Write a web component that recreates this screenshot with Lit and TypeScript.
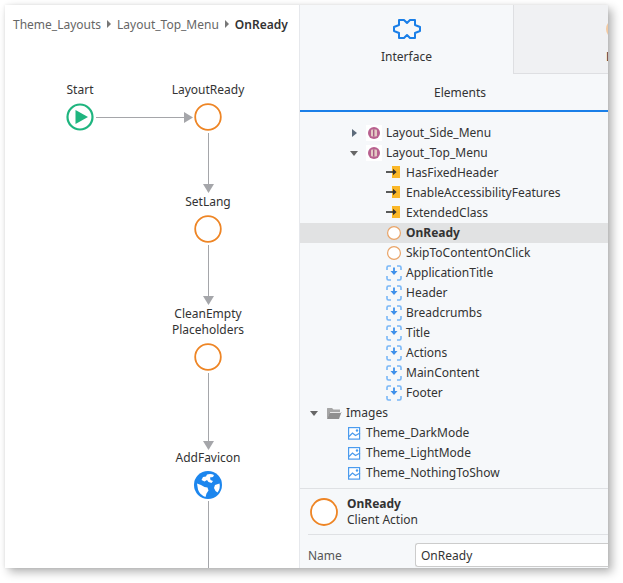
import { LitElement, html, css, svg } from "lit";
import { customElement } from "lit/decorators.js";

type Kind = "layout" | "input" | "action" | "slot" | "folder" | "image";
interface Row {
  label: string;
  kind: Kind;
  level: string;
  arrow?: "right" | "down";
  selected?: boolean;
}

const rows: Row[] = [
  { label: "Layout_Side_Menu", kind: "layout", level: "l2", arrow: "right" },
  { label: "Layout_Top_Menu", kind: "layout", level: "l2", arrow: "down" },
  { label: "HasFixedHeader", kind: "input", level: "l3" },
  { label: "EnableAccessibilityFeatures", kind: "input", level: "l3" },
  { label: "ExtendedClass", kind: "input", level: "l3" },
  { label: "OnReady", kind: "action", level: "l3", selected: true },
  { label: "SkipToContentOnClick", kind: "action", level: "l3" },
  { label: "ApplicationTitle", kind: "slot", level: "l3" },
  { label: "Header", kind: "slot", level: "l3" },
  { label: "Breadcrumbs", kind: "slot", level: "l3" },
  { label: "Title", kind: "slot", level: "l3" },
  { label: "Actions", kind: "slot", level: "l3" },
  { label: "MainContent", kind: "slot", level: "l3" },
  { label: "Footer", kind: "slot", level: "l3" },
  { label: "Images", kind: "folder", level: "l1", arrow: "down" },
  { label: "Theme_DarkMode", kind: "image", level: "limg" },
  { label: "Theme_LightMode", kind: "image", level: "limg" },
  { label: "Theme_NothingToShow", kind: "image", level: "limg" },
];

interface Node {
  x: number;
  y: number;
  lines: string[];
  kind: "start" | "action" | "globe";
}

/* canvas coordinates: node centre */
const nodes: Node[] = [
  { x: 75, y: 112, lines: ["Start"], kind: "start" },
  { x: 203, y: 112, lines: ["LayoutReady"], kind: "action" },
  { x: 203, y: 224, lines: ["SetLang"], kind: "action" },
  { x: 203, y: 352, lines: ["CleanEmpty", "Placeholders"], kind: "action" },
  { x: 203, y: 480, lines: ["AddFavicon"], kind: "globe" },
];

const treeIcon = (k: Kind) => {
  switch (k) {
    case "layout":
      return html`<svg class="ic lay" viewBox="0 0 16 16">
        <rect width="16" height="16" fill="#fff" />
        <circle cx="8" cy="8" r="6" fill="#b8608f" />
        <rect x="5" y="4.5" width="6" height="7" rx="1" fill="#e4c9c4" />
        <rect x="7" y="4.5" width="1.4" height="7" fill="#a85a86" />
      </svg>`;
    case "input":
      return html`<svg class="ic" viewBox="0 0 16 16">
        <rect x="6" y="1" width="8" height="12" fill="#fbb829" />
        <path d="M0 7h9" stroke="#333" stroke-width="1.6" fill="none" />
        <path d="M7 3.8 10.6 7 7 10.2z" fill="#333" />
      </svg>`;
    case "action":
      return html`<svg class="ic" viewBox="0 0 16 16">
        <circle cx="8" cy="8" r="6.4" fill="#fff" stroke="#e9a468" stroke-width="1.2" />
      </svg>`;
    case "slot":
      return html`<svg class="ic" viewBox="0 0 16 16">
        <path
          d="M1 5V2.500Q1 1 2.500 1H5M11 1h2.500Q15 1 15 2.500V5M15 11v2.500Q15 15 13.500 15H11M5 15H2.500Q1 15 1 13.500V11"
          fill="none"
          stroke="#79b7f7"
          stroke-width="1.600"
        />
        <path d="M8 2.500V7" stroke="#3f90ea" stroke-width="1.800" fill="none" />
        <path d="M4.500 6h7L8 10z" fill="#3f90ea" />
      </svg>`;
    case "folder":
      return html`<svg class="ic" viewBox="0 0 16 16">
        <path d="M1 14V3.500Q1 3 1.500 3H6l1.500 1.500H14V7H4.500z" fill="#a6a6a6" />
        <path d="M1 14 4 7h11.500L13 14z" fill="#8f8f8f" />
        <path d="M4 7.500h11" stroke="#e8e8e8" stroke-width="1" />
      </svg>`;
    case "image":
      return html`<svg class="ic" viewBox="0 0 16 16">
        <rect x="2.600" y="2.600" width="11" height="11.500" fill="#fff" stroke="#4a9bee" stroke-width="1.200" />
        <path d="M3 11.500 6.500 8l3 2.500L14 8" fill="none" stroke="#4a9bee" stroke-width="1.200" />
        <circle cx="11" cy="5.500" r="1.200" fill="#4a9bee" />
      </svg>`;
  }
};

const nodeIcon = (k: Node["kind"]) => {
  if (k === "start")
    return svg`<circle cx="14" cy="14" r="12.500" fill="#fff" stroke="#1fb57f" stroke-width="2.200" />
      <path d="M9.500 7 22 14 9.500 21z" fill="#1fb57f" />`;
  if (k === "action")
    return svg`<circle cx="14" cy="14" r="12.800" fill="#fff" stroke="#ee8525" stroke-width="1.800" />`;
  return svg`<circle cx="14" cy="14" r="14" fill="#1c86ee" />
    <path d="M13 3.500c2-.8 5-.8 7 .5l-1 2-3 .5.500 2.500 2.500 1-1.500 2-3-1-1.500-2-2.500 1.500-3-1.500L9 6l3-.5z" fill="#fff" />
    <path d="M3 12.500l4 1.500 3.500 2 3 .5 1 3-2 3-1 3.500c-3-1-6.500-4-7.500-7.500z" fill="#fff" />
    <path d="M21 14l4.500-1.500c.8 3 0 6.500-2 9l-2-1.500-1.500-3z" fill="#fff" />`;
};

@customElement("app-root")
export class AppRoot extends LitElement {
  static styles = css`
    :host {
      display: block;
      width: 623px;
      height: 583px;
      overflow: hidden;
      background: #fff;
      font-family: "Noto Sans", "Open Sans", sans-serif;
      font-size: 12px;
      color: #333;
    }
    .window {
      margin: 5px 0 0 5px;
      width: 603px;
      height: 563px;
      display: flex;
      background: #fff;
      box-shadow: 4px 4px 9px rgba(0, 0, 0, 0.3), 0 0 3px rgba(0, 0, 0, 0.08);
    }
    .canvas {
      position: relative;
      width: 294px;
      flex: none;
      overflow: hidden;
      background: #fff;
    }
    .crumbs {
      display: flex;
      align-items: center;
      height: 38px;
      padding-left: 8px;
      color: #666;
      white-space: nowrap;
    }
    .crumbs b {
      color: #333;
      font-weight: 600;
    }
    .tri {
      width: 0;
      height: 0;
      margin: 0 6px;
      border-left: 4px solid #777;
      border-top: 4px solid transparent;
      border-bottom: 4px solid transparent;
    }
    .wires {
      position: absolute;
      left: 0;
      top: 0;
    }
    .node {
      position: absolute;
      width: 28px;
      height: 28px;
    }
    .node svg {
      display: block;
    }
    .node .cap {
      position: absolute;
      left: 50%;
      bottom: 28px;
      padding-bottom: 5px;
      transform: translateX(-50%);
      text-align: center;
      line-height: 16px;
      white-space: nowrap;
    }
    .panel {
      flex: 1;
      min-width: 0;
      display: flex;
      flex-direction: column;
      overflow: hidden;
      background: #f6f8fa;
      border-left: 1px solid #e6e8ec;
    }
    .tabs {
      display: flex;
      height: 69px;
      flex: none;
    }
    .tab {
      flex: none;
      width: 213px;
      display: flex;
      flex-direction: column;
      align-items: center;
      padding-top: 14px;
      box-sizing: border-box;
      white-space: nowrap;
    }
    .tab.off {
      background: #f0f1f3;
      border-left: 1px solid #dedfe2;
      border-bottom: 1px solid #dedfe2;
    }
    .tab svg {
      display: block;
      height: 20px;
    }
    .tab span {
      margin-top: 10px;
      line-height: 16px;
    }
    .tab.off span {
      margin-left: 2px;
    }
    .sub {
      height: 38px;
      flex: none;
      box-sizing: border-box;
      display: flex;
      align-items: center;
      justify-content: center;
      padding: 2px 0 0 12px;
      border-bottom: 2px solid #1a7fe8;
      line-height: 16px;
    }
    .tree {
      padding-top: 11px;
      flex: none;
      height: 377px;
      box-sizing: border-box;
      border-bottom: 1px solid #dfe1e4;
    }
    .row {
      display: flex;
      align-items: center;
      height: 20px;
      gap: 4px;
      white-space: nowrap;
    }
    .row.sel {
      background: #e1e2e3;
    }
    .row.sel .txt {
      font-weight: 700;
    }
    .txt {
      margin-bottom: 2px;
    }
    .l1 {
      padding-left: 9px;
    }
    .l2 {
      padding-left: 49px;
    }
    .l3 {
      padding-left: 86px;
    }
    .limg {
      padding-left: 46px;
    }
    .slotbox {
      width: 10px;
      margin-right: 3px;
      display: flex;
      justify-content: center;
    }
    .ic {
      width: 16px;
      height: 16px;
      flex: none;
      display: block;
    }
    .a-right {
      width: 0;
      height: 0;
      border-left: 5px solid #5d6b7a;
      border-top: 4px solid transparent;
      border-bottom: 4px solid transparent;
    }
    .a-down {
      width: 0;
      height: 0;
      border-top: 5px solid #666;
      border-left: 4.500px solid transparent;
      border-right: 4.500px solid transparent;
    }
    .info {
      margin-left: 8px;
      height: 46px;
      flex: none;
      box-sizing: border-box;
      display: flex;
      align-items: center;
      gap: 8px;
      border-bottom: 1px solid #dfe1e4;
    }
    .info svg {
      display: block;
      margin-left: 1px;
    }
    .info div {
      line-height: 16px;
    }
    .info b {
      display: block;
      font-weight: 700;
    }
    .prop {
      display: flex;
      align-items: flex-start;
      padding: 8px 0 0 8px;
      white-space: nowrap;
    }
    .prop label {
      width: 107px;
      flex: none;
      line-height: 26px;
      color: #555;
    }
    .prop .val {
      width: 200px;
      flex: none;
      height: 24px;
      box-sizing: border-box;
      padding-left: 5px;
      line-height: 24px;
      background: #fff;
      border: 1px solid #ccc;
      border-right: 0;
      border-radius: 3px 0 0 3px;
    }
  `;

  render() {
    return html`<div class="window">
      <div class="canvas">
        <div class="crumbs">
          <span>Theme_Layouts</span><i class="tri"></i><span>Layout_Top_Menu</span><i class="tri"></i
          ><b>OnReady</b>
        </div>
        <svg class="wires" width="294" height="563" fill="none">
          <g stroke="#a5a6aa" stroke-width="1">
            <path d="M91 112.500H180" />
            <path d="M203.500 128V180" />
            <path d="M203.500 240V292" />
            <path d="M203.500 368V437" />
            <path d="M203.500 496V563" />
          </g>
          <g fill="#a5a6aa">
            <path d="M179 107 188 112.500 179 118z" />
            <path d="M198 179h11l-5.500 9z" />
            <path d="M198 291h11l-5.500 9z" />
            <path d="M198 436h11l-5.500 9z" />
          </g>
        </svg>
        ${nodes.map(
          (n) => html`<div class="node" style="left:${n.x - 14}px;top:${n.y - 14}px">
            <div class="cap">${n.lines.map((l) => html`<div>${l}</div>`)}</div>
            <svg width="28" height="28" viewBox="0 0 28 28">${nodeIcon(n.kind)}</svg>
          </div>`
        )}
      </div>
      <div class="panel">
        <div class="tabs">
          <div class="tab">
            <svg width="28" height="20" viewBox="0 0 28 20" fill="none">
              <path
                d="M6 1H11L14 4 17 1H22V6L27 8V12L22 14V19H17L14 16 11 19H6V14L1 12V8L6 6Z"
                stroke="#1a7fe8"
                stroke-width="2"
                stroke-linejoin="round"
              />
            </svg>
            <span>Interface</span>
          </div>
          <div class="tab off">
            <svg width="28" height="20" viewBox="0 0 28 20">
              <circle cx="10" cy="10" r="8.500" fill="none" stroke="#f3c9a0" stroke-width="3" />
            </svg>
            <span>Logic</span>
          </div>
        </div>
        <div class="sub">Elements</div>
        <div class="tree">
          ${rows.map(
            (r) => html`<div class="row ${r.level} ${r.selected ? "sel" : ""}">
              ${r.arrow
                ? html`<span class="slotbox"><i class="a-${r.arrow}"></i></span>`
                : ""}
              ${treeIcon(r.kind)}<span class="txt">${r.label}</span>
            </div>`
          )}
        </div>
        <div class="info">
          <svg width="30" height="30" viewBox="0 0 30 30">
            <circle cx="15" cy="15" r="13" fill="#fff" stroke="#ee8525" stroke-width="1.800" />
          </svg>
          <div><b>OnReady</b>Client Action</div>
        </div>
        <div class="prop">
          <label>Name</label>
          <div class="val">OnReady</div>
        </div>
      </div>
    </div>`;
  }
}
